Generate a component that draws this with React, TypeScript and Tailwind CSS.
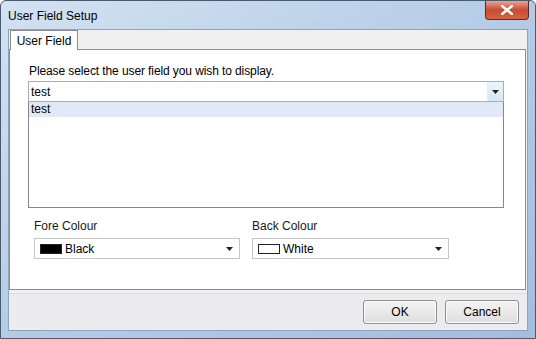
import React from 'react';

const font = { fontFamily: '"Segoe UI", "Liberation Sans", Arial, sans-serif' };

function Arrow() {
  return (
    <svg width="7" height="4" viewBox="0 0 7 4">
      <path d="M0 0h7L3.5 4z" fill="#222" />
    </svg>
  );
}

function ColourCombo({ swatch, label, width }: { swatch: string; label: string; width: string }) {
  return (
    <div className={`${width} h-[21px] bg-white border border-[#c5c5c5] flex items-center pl-[5px] pr-[6px]`}>
      <span className={`w-[22px] h-[10px] border border-[#222] ${swatch}`} />
      <span className="ml-[3px] text-[12px] text-black flex-1">{label}</span>
      <Arrow />
    </div>
  );
}

function Button({ children }: { children: React.ReactNode }) {
  return (
    <button className="w-[74px] h-[24px] rounded-[3px] border border-[#8e8f8f] bg-gradient-to-b from-[#f4f4f4] to-[#dedede] text-[12px] text-black shadow-[inset_0_0_0_1px_#fbfbfb]">
      {children}
    </button>
  );
}

export default function App() {
  return (
    <div
      className="w-[536px] h-[339px] bg-gradient-to-br from-[#d3e2f2] via-[#b4cce6] to-[#a2bedd] border border-[#4a5a6e] rounded-t-[6px] flex flex-col overflow-hidden"
      style={font}
    >
      {/* title bar */}
      <div className="h-[28px] flex items-start shrink-0">
        <span className="ml-[7px] mt-[6px] text-[12px] text-black">User Field Setup</span>
        <div className="ml-auto mr-[6px] w-[44px] h-[19px] rounded-b-[4px] border border-[#5c2a24] border-t-0 bg-gradient-to-b from-[#e8a393] via-[#c84a33] to-[#d7643f] flex items-center justify-center">
          <svg width="12" height="10" viewBox="0 0 12 10">
            <path d="M1 1l10 8M11 1L1 9" stroke="#fff" strokeWidth="2.6" strokeLinecap="square" />
          </svg>
        </div>
      </div>

      {/* client area */}
      <div className="mx-[7px] mb-[7px] flex-1 bg-[#f0f0f0] border border-[#8ea3bd] flex flex-col">
        <div className="h-[19px] flex items-end shrink-0 pl-[1px]">
          <div className="h-[20px] w-[68px] bg-white border border-[#898c95] border-b-0 flex items-center justify-center text-[12px] text-black relative top-[1px]">
            User Field
          </div>
        </div>
        <div className="h-[241px] mr-[1px] bg-white border border-[#898c95] flex flex-col pl-[18px] pr-[21px] pt-[14px]">
          <span className="text-[12px] text-black leading-[15px] pl-[1px] tracking-[-0.1px]">Please select the user field you wish to display.</span>
          <div className="mt-[2px] h-[21px] border border-[#abadb3] flex items-center">
            <span className="pl-[2px] flex-1 text-[12px] text-black">test</span>
            <div className="w-[16px] h-full bg-gradient-to-b from-[#eaf4fc] to-[#d8e7f5] flex items-center justify-center border-l border-[#e5eef7]">
              <Arrow />
            </div>
          </div>
          <div className="h-[106px] border border-[#828790] border-t-0 bg-white">
            <div className="h-[15px] bg-[#e1e9f8] flex items-center pl-[2px] text-[12px] text-black leading-[15px]">test</div>
          </div>
          <div className="mt-[11px] flex pl-[6px] gap-[12px]">
            <div className="flex flex-col gap-[4px]">
              <span className="text-[12px] text-[#1a1a1a] leading-[15px]">Fore Colour</span>
              <ColourCombo swatch="bg-black" label="Black" width="w-[206px]" />
            </div>
            <div className="flex flex-col gap-[4px]">
              <span className="text-[12px] text-[#1a1a1a] leading-[15px]">Back Colour</span>
              <ColourCombo swatch="bg-white" label="White" width="w-[197px]" />
            </div>
          </div>
        </div>
        <div className="mt-[3px] flex-1 border-t border-[#dcdcdc] bg-[#ecebef] flex items-center justify-end gap-[8px] pr-[8px]">
          <Button>OK</Button>
          <Button>Cancel</Button>
        </div>
      </div>
    </div>
  );
}
